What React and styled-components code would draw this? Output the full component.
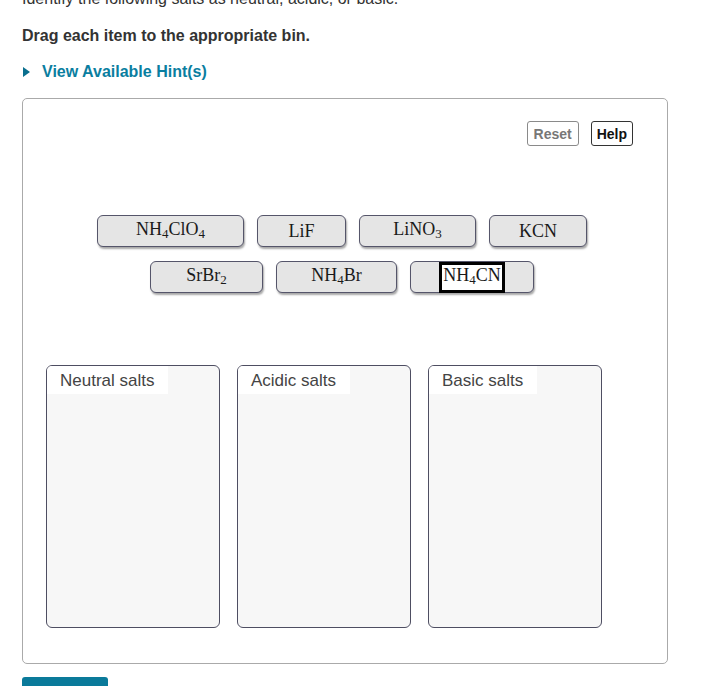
import React from 'react'
import styled, { createGlobalStyle } from 'styled-components'

const GlobalStyle = createGlobalStyle`
	body {
		margin: 0;
		background: #fff;
		font-family: 'Liberation Sans', Arial, sans-serif;
		color: #333;
	}
`

const Page = styled.div`
	padding: 0 0 0 22px;
	width: 646px;
	height: 686px;
	overflow: hidden;
`

const Intro = styled.p`
	margin: -11px 0 0;
	font-size: 16px;
	line-height: 20px;
	color: #333;
`

const Instruction = styled.p`
	margin: 17px 0 0;
	font-size: 16px;
	font-weight: bold;
	line-height: 20px;
	color: #333;
`

const Hint = styled.div`
	display: flex;
	align-items: center;
	gap: 12px;
	margin-top: 16px;
	font-size: 16px;
	font-weight: bold;
	color: #0a7ea0;
	line-height: 20px;
`

const Triangle = styled.span`
	width: 0;
	height: 0;
	border-top: 5px solid transparent;
	border-bottom: 5px solid transparent;
	border-left: 7px solid #0a6f8e;
	margin-left: 1px;
`

const Panel = styled.div`
	margin-top: 16px;
	height: 566px;
	border: 1px solid #aaa;
	border-radius: 5px;
	box-sizing: border-box;
	padding: 22px 34px 0 23px;
	display: flex;
	flex-direction: column;
`

const Toolbar = styled.div`
	display: flex;
	justify-content: flex-end;
	gap: 12px;
`

const ToolButton = styled.button`
	font-family: 'Liberation Sans', Arial, sans-serif;
	font-size: 14px;
	font-weight: bold;
	height: 25px;
	padding: 0 ${p => (p.$muted ? 6 : 5)}px;
	background: #fff;
	border-radius: 3px;
	border: 1px solid ${p => (p.$muted ? '#8a8a8a' : '#333')};
	color: ${p => (p.$muted ? '#777' : '#111')};
`

const Tray = styled.div`
	display: flex;
	flex-direction: column;
	gap: 14px;
	margin-top: 69px;
`

const ChipRow = styled.div`
	display: flex;
	gap: 13px;
	margin-left: ${p => p.$indent}px;
`

const Chip = styled.div`
	width: ${p => p.$w}px;
	height: 32px;
	box-sizing: border-box;
	border: 1.5px solid #55556a;
	border-radius: 6px;
	background: #e5e5e5;
	box-shadow: 1px 2px 2px rgba(0, 0, 0, 0.35);
	display: flex;
	align-items: center;
	justify-content: center;
	font-family: 'Liberation Serif', 'Times New Roman', serif;
	font-size: 18px;
	color: #1a1a1a;
`

const ChipLabel = styled.span`
	line-height: 20px;
	padding: 0 1px;
	border: ${p => (p.$focused ? '3px solid #000' : '0')};
	background: ${p => (p.$focused ? '#fff' : 'transparent')};
`

const Bins = styled.div`
	display: flex;
	gap: 17px;
	margin-top: 72px;
`

const Bin = styled.div`
	width: 174px;
	height: 263px;
	box-sizing: border-box;
	border: 1.5px solid #4e4e62;
	border-radius: 6px;
	background: #f7f7f7;
`

const BinLabel = styled.div`
	display: inline-block;
	background: #fff;
	padding: 5px 14px 3px 13px;
	font-size: 17px;
	line-height: 20px;
	color: #444;
	border-top-left-radius: 5px;
`

const Submit = styled.div`
	margin-top: 13px;
	width: 86px;
	height: 20px;
	background: #0a7a9a;
	border-radius: 3px;
`

const Sub = styled.sub`
	font-size: 13px;
	vertical-align: -3px;
`

const chipRows = [
	{
		indent: 51,
		items: [
			{ w: 147, label: <>NH<Sub>4</Sub>ClO<Sub>4</Sub></> },
			{ w: 89, label: 'LiF' },
			{ w: 117, label: <>LiNO<Sub>3</Sub></> },
			{ w: 98, label: 'KCN' },
		],
	},
	{
		indent: 104,
		items: [
			{ w: 113, label: <>SrBr<Sub>2</Sub></> },
			{ w: 121, label: <>NH<Sub>4</Sub>Br</> },
			{ w: 124, label: <>NH<Sub>4</Sub>CN</>, focused: true },
		],
	},
]

const bins = ['Neutral salts', 'Acidic salts', 'Basic salts']

const App = () => {
	return (
		<Page>
			<GlobalStyle />
			<Intro>Identify the following salts as neutral, acidic, or basic.</Intro>
			<Instruction>Drag each item to the appropriate bin.</Instruction>
			<Hint>
				<Triangle />
				View Available Hint(s)
			</Hint>
			<Panel>
				<Toolbar>
					<ToolButton $muted>Reset</ToolButton>
					<ToolButton>Help</ToolButton>
				</Toolbar>
				<Tray>
					{chipRows.map((row, i) => (
						<ChipRow key={i} $indent={row.indent}>
							{row.items.map((item, j) => (
								<Chip key={j} $w={item.w}>
									<ChipLabel $focused={item.focused}>{item.label}</ChipLabel>
								</Chip>
							))}
						</ChipRow>
					))}
				</Tray>
				<Bins>
					{bins.map(b => (
						<Bin key={b}>
							<BinLabel>{b}</BinLabel>
						</Bin>
					))}
				</Bins>
			</Panel>
			<Submit />
		</Page>
	)
}

export default App
